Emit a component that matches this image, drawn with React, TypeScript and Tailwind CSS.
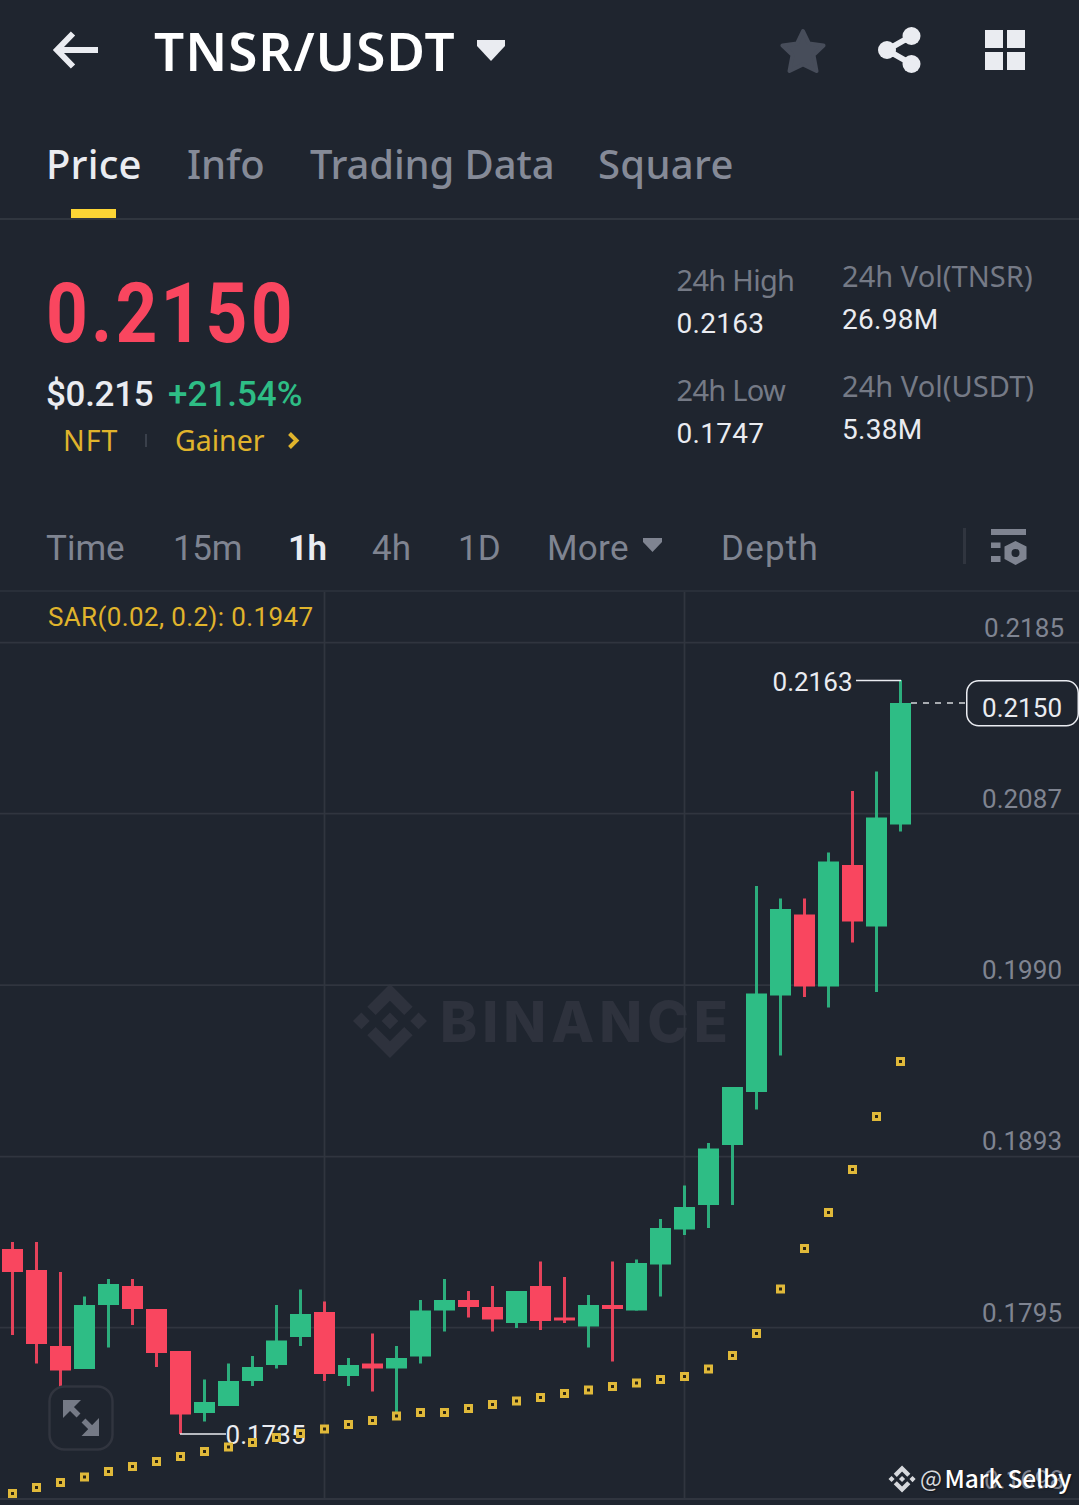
import clsx from 'clsx';

const GREEN = '#2ebd85';
const RED = '#f9465f';
const GRID = '#30353f';

// [direction, high, open/close top, open/close bottom, low] in chart pixels
type Candle = ['up' | 'down', number, number, number, number];

const candles: Candle[] = [
  ['down', 1242, 1249, 1272, 1335],
  ['down', 1242, 1270, 1344, 1363.5],
  ['down', 1272, 1346, 1370.5, 1388],
  ['up', 1296.5, 1305, 1369, 1369],
  ['up', 1279, 1284, 1305, 1347.5],
  ['down', 1279, 1286, 1309, 1325],
  ['down', 1309, 1309, 1353, 1367],
  ['down', 1351, 1351, 1414.5, 1434],
  ['up', 1379.5, 1402, 1413, 1421.5],
  ['up', 1363.5, 1381, 1406, 1406],
  ['up', 1356, 1367, 1381, 1386],
  ['up', 1305, 1340.5, 1365, 1368.5],
  ['up', 1289.5, 1314, 1337, 1346],
  ['down', 1301.5, 1312, 1374, 1381],
  ['up', 1358, 1365, 1376, 1386],
  ['down', 1333.5, 1363.5, 1368.5, 1391.5],
  ['up', 1346, 1358, 1368.5, 1412],
  ['up', 1300, 1310.5, 1356.5, 1363.5],
  ['up', 1279, 1300, 1310.5, 1331.5],
  ['down', 1291, 1300, 1307, 1317.5],
  ['down', 1286, 1307, 1319.5, 1331.5],
  ['up', 1291, 1291, 1323, 1328],
  ['down', 1261.5, 1286, 1321, 1330],
  ['down', 1277, 1317.5, 1320.5, 1323],
  ['up', 1295, 1305, 1326.5, 1347.5],
  ['down', 1261.5, 1305, 1309, 1361.5],
  ['up', 1259.5, 1263, 1310.5, 1310.5],
  ['up', 1219, 1228, 1264.5, 1296.5],
  ['up', 1185.5, 1207, 1229.5, 1235],
  ['up', 1143, 1148.5, 1205, 1228],
  ['up', 1087, 1087, 1145, 1205],
  ['up', 886, 993.5, 1092, 1109.5],
  ['up', 898.5, 909, 995.5, 1055.5],
  ['down', 898.5, 914.5, 986.5, 997],
  ['up', 852.5, 861.5, 986.5, 1007.5],
  ['down', 791, 865, 921.5, 942.5],
  ['up', 771.5, 817.5, 926.5, 992],
  ['up', 680, 703, 824.5, 831.5],
];

const sar = [
  1493.5, 1487.5, 1482.5, 1477, 1471.5, 1466.5, 1461.5, 1456.5, 1451.5, 1447,
  1442.5, 1437.5, 1433.5, 1429, 1424.5, 1420.5, 1416, 1412.5, 1412.5, 1408.5,
  1404.5, 1401, 1397.5, 1393.5, 1390, 1386.5, 1383, 1379.5, 1376.5, 1369,
  1355.5, 1333.5, 1289, 1248.5, 1212.5, 1169.5, 1116.5, 1061.5,
];

const axis = [
  { label: '0.2185', x: 984, y: 637 },
  { label: '0.2087', x: 982, y: 808 },
  { label: '0.1990', x: 982, y: 979 },
  { label: '0.1893', x: 982, y: 1150 },
  { label: '0.1795', x: 982, y: 1322 },
  { label: '0.1698', x: 984, y: 1489 },
];

const BINANCE_MARK =
  'M16.624 13.9202l2.7175 2.7154-7.353 7.353-7.353-7.352 2.7175-2.7164 4.6355 4.6595 4.6356-4.6595zm4.6366-4.6366L24 12l-2.7154 2.7164L18.5682 12l2.6924-2.7164zm-9.272.001l2.7163 2.6914-2.7164 2.7174v-.001L9.2721 12l2.7164-2.7154zm-9.2722-.001L5.4088 12l-2.6914 2.6924L0 12l2.7164-2.7164zM11.9885.0115l7.353 7.329-2.7174 2.7154-4.6356-4.6356-4.6355 4.6595-2.7174-2.7154 7.353-7.353z';

function Caret({ className }: { className: string }) {
  return (
    <svg viewBox="0 0 28 21" preserveAspectRatio="none" className={className} fill="currentColor">
      <path d="M0 0h28v6L14 21 0 6z" />
    </svg>
  );
}

function Header() {
  return (
    <header className="flex h-[100px] items-center pl-[52px] text-[#eaecf1]">
      <svg width="47" height="40" viewBox="0 0 47 40" className="shrink-0" fill="none" stroke="currentColor" strokeWidth="6">
        <path d="M21 3.5 5 20l16 16.5M5 20h41" />
      </svg>
      <h1 className="ml-[55px] w-[323px] pt-[2px] font-['Noto_Sans'] text-[53px] font-semibold tracking-[1px] whitespace-nowrap text-white">
        TNSR/USDT
      </h1>
      <Caret className="h-[21px] w-[28px] shrink-0" />
      <svg width="46" height="48" viewBox="0 0 46 48" className="ml-[275px] shrink-0" fill="#474d5a" stroke="#474d5a" strokeWidth="4" strokeLinejoin="round">
        <path d="M23 5l6 12.5 14.5 2-10 9.5 3 16L23 38.5 9.5 45l3-16-10-9.5L17 17.5z" />
      </svg>
      <svg width="44" height="48" viewBox="0 0 44 48" className="ml-[51px] shrink-0" fill="currentColor">
        <path d="M34.5 10 10 24l24.5 14" fill="none" stroke="currentColor" strokeWidth="6" />
        <circle cx="10" cy="24" r="9" />
        <circle cx="34.5" cy="10" r="9" />
        <circle cx="34.5" cy="38" r="9" />
      </svg>
      <div className="ml-[64px] grid grid-cols-2 gap-[4px]">
        <i className="size-[18px] bg-current" />
        <i className="size-[18px] bg-current" />
        <i className="size-[18px] bg-current" />
        <i className="size-[18px] bg-current" />
      </div>
    </header>
  );
}

const tabs = [
  { label: 'Price', width: 'w-[141px] tracking-[0.2px]', active: true },
  { label: 'Info', width: 'w-[123px]' },
  { label: 'Trading Data', width: 'w-[288px]' },
  { label: 'Square', width: 'w-[140px] tracking-[0.3px]' },
];

function Tabs() {
  return (
    <nav className="flex h-[120px] border-b-2 border-[#30363f] pt-[34px] pl-[46px] font-['Noto_Sans'] text-[40px] leading-[60px] font-medium tracking-[-0.1px] whitespace-nowrap">
      {tabs.map((tab) => (
        <div key={tab.label} className={clsx('flex shrink-0 flex-col justify-between', tab.width)}>
          <span className={tab.active ? 'text-[#eaecf1]' : 'text-[#858a97]'}>{tab.label}</span>
          {tab.active && <span className="ml-[25px] h-[9px] w-[45px] bg-[#fcd535]" />}
        </div>
      ))}
    </nav>
  );
}

interface StatProps {
  label: string;
  value: string;
  wide?: boolean;
}

function Stat({ label, value, wide }: StatProps) {
  return (
    <div className="leading-[40px] whitespace-nowrap">
      <div
        className={clsx(
          "font-['Noto_Sans'] text-[29px] text-[#757a86]",
          wide ? 'tracking-[0.05px]' : 'tracking-[-0.7px]',
        )}
      >
        {label}
      </div>
      <div className="mt-1 font-[Roboto] text-[28px] tracking-[0.3px] text-[#eaecf1]">{value}</div>
    </div>
  );
}

function Summary() {
  return (
    <section className="flex h-[284px] pl-[46px]">
      <div className="w-[630px] pt-[52px]">
        <div className="origin-left scale-x-[0.88] font-[Roboto] text-[83px] leading-[84px] font-bold tracking-[3.6px] text-[#f9465f]">
          0.2150
        </div>
        <div className="mt-[17px] flex font-[Roboto] text-[35px] leading-[44px] font-medium tracking-[-0.3px]">
          <span className="w-[122px] text-[#eaecf1]">$0.215</span>
          <span className="tracking-normal text-[#2ebd85]">+21.54%</span>
        </div>
        <div className="mt-px flex items-center pl-[17px] font-['Noto_Sans'] text-[28.5px] leading-[44px] text-[#e0b42c]">
          <span className="w-[82px] tracking-[1px]">NFT</span>
          <span className="h-[13px] w-[2px] bg-[#3a404b]" />
          <span className="ml-[28px] w-[113px]">Gainer</span>
          <svg width="12" height="17" viewBox="0 0 12 17" fill="none" stroke="currentColor" strokeWidth="4">
            <path d="M1.5 1.5l7 7-7 7" />
          </svg>
        </div>
      </div>
      <div className="flex w-[166px] flex-col gap-[26px] pt-[39.5px] pl-[0.5px]">
        <Stat label="24h High" value="0.2163" />
        <Stat label="24h Low" value="0.1747" />
      </div>
      <div className="flex flex-col gap-[26px] pt-[36px]">
        <Stat label="24h Vol(TNSR)" value="26.98M" wide />
        <Stat label="24h Vol(USDT)" value="5.38M" wide />
      </div>
    </section>
  );
}

const intervals = [
  { label: 'Time', width: 'w-[127px]' },
  { label: '15m', width: 'w-[115px] tracking-[-0.3px]' },
  { label: '1h', width: 'w-[84px] tracking-[-0.5px]', active: true },
  { label: '4h', width: 'w-[86px]' },
  { label: '1D', width: 'w-[89px]' },
];

function Intervals() {
  return (
    <div className="flex h-[88px] items-center border-b-2 border-[#292f39] pt-[4px] pl-[46px] font-[Roboto] text-[35px] whitespace-nowrap text-[#7f8491]">
      {intervals.map((item) => (
        <span
          key={item.label}
          className={clsx('shrink-0', item.width, item.active && 'font-semibold text-[#eaecf1]')}
        >
          {item.label}
        </span>
      ))}
      <span className="w-[96px] shrink-0 tracking-[0.3px]">More</span>
      <Caret className="mb-[8px] h-[14px] w-[19px] shrink-0" />
      <span className="ml-[59px] w-[242px] shrink-0 tracking-[1.2px]">Depth</span>
      <span className="mb-[7px] h-[36px] w-[3px] shrink-0 bg-[#30353f]" />
      <svg width="36" height="36" viewBox="0 0 36 36" className="mb-[5px] ml-[25px] shrink-0" fill="currentColor">
        <path d="M0 0h35v6H0zM0 13.5h9.5v5.5H0zM0 27h9.5v6H0z" />
        <path
          fillRule="evenodd"
          d="M24.5 12l11 5.5v12.5l-11 6-11-6V17.5zM24.5 20a4 4 0 1 0 0 8 4 4 0 0 0 0-8z"
        />
      </svg>
    </div>
  );
}

function Chart() {
  return (
    <svg width="1079" height="913" viewBox="0 592 1079 913" className="block font-[Roboto] text-[26px]">
      <g fill="#2e323d">
        <path transform="translate(353 984) scale(3.083)" d={BINANCE_MARK} />
        <text x="440" y="1041.5" textLength="288" className="font-[Inter] text-[56px] font-extrabold">
          BINANCE
        </text>
      </g>

      <g stroke={GRID} strokeWidth="1.75">
        {[642.5, 813.5, 985, 1156.5, 1327.5].map((y) => (
          <path key={y} d={`M0 ${y}H1079`} />
        ))}
        <path d="M324.5 592V1499M684.5 592V1499" />
        <path d="M0 1499H1079" strokeWidth="2" />
      </g>

      <text x="48" y="626" textLength="265" fill="#e0b42c">
        SAR(0.02, 0.2): 0.1947
      </text>
      {axis.map((tick) => (
        <text key={tick.label} x={tick.x} y={tick.y} textLength="80" fill="#7f8491">
          {tick.label}
        </text>
      ))}

      {candles.map(([dir, high, top, bottom, low], i) => {
        const x = 12.5 + i * 24;
        const fill = dir === 'up' ? GREEN : RED;
        return (
          <g key={i} fill={fill}>
            <rect x={x - 1.5} y={high} width="3" height={low - high} opacity="0.9" />
            <rect x={x - 10.5} y={top} width="21" height={bottom - top} />
          </g>
        );
      })}

      {/* Highest and lowest price in view */}
      <g fill="#eaecf1">
        <text x="772.5" y="691" textLength="80">0.2163</text>
        <text x="225.5" y="1443.5" textLength="80">0.1735</text>
        <path d="M856 680.5H901M180 1434H226" stroke="#eaecf1" strokeWidth="1.5" />
      </g>

      {/* Last price */}
      <path d="M911 703H966" stroke="#d5d7dc" strokeWidth="1.5" strokeDasharray="6 6" />
      <rect x="966.75" y="680.75" width="111.5" height="45" rx="12" fill="#1f252f" stroke="#eaecf1" strokeWidth="1.5" />
      <text x="982" y="717" textLength="80" fill="#eaecf1">
        0.2150
      </text>

      <g fill="#2a2413" stroke="#e0b93a" strokeWidth="3">
        {sar.map((y, i) => (
          <rect key={i} x={9.5 + i * 24} y={y - 3} width="6" height="6" />
        ))}
      </g>

      {/* Fullscreen toggle */}
      <rect x="49.5" y="1386.5" width="63" height="63" rx="15" fill="#1f252f" stroke="#31353f" strokeWidth="2.5" />
      <g fill="#757a86" stroke="#757a86">
        <path d="M63 1400h18l-18 18zM99 1436H81.5L99 1418z" stroke="none" />
        <path d="M69 1406l9.5 9.5M83.5 1420.5l9.5 9.5" strokeWidth="5.5" />
      </g>

      {/* Author mark */}
      <g fill="#d6d8dc" className="font-['Noto_Sans_CJK_SC',sans-serif] text-[24.5px] [text-shadow:1px_1px_2px_rgba(0,0,0,0.5)]">
        <path transform="translate(888.5 1465.5) scale(1.13)" d={BINANCE_MARK} />
        <text x="920" y="1487" textLength="22" lengthAdjust="spacingAndGlyphs" className="text-[23px]">
          @
        </text>
        <text x="944.5" y="1488" textLength="127" fill="#ffffff" className="font-medium">
          Mark Selby
        </text>
      </g>
    </svg>
  );
}

export default function App() {
  return (
    <main className="h-[1505px] w-[1079px] overflow-hidden bg-[#1f252f]">
      <Header />
      <Tabs />
      <Summary />
      <Intervals />
      <Chart />
    </main>
  );
}
